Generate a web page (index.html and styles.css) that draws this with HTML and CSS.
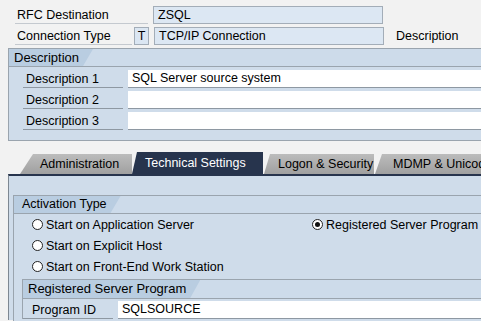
FILE: index.html
```html
<!DOCTYPE html>
<html lang="en">

<head>
    <meta charset="UTF-8" />
    <title>RFC Destination ZSQL</title>
    <link rel="stylesheet" href="styles.css">
</head>

<body>
    <div class="screen">
        <div class="top-row first">
            <span class="top-label">RFC Destination</span>
            <span class="field">ZSQL</span>
        </div>
        <div class="top-row">
            <span class="top-label short">Connection Type</span>
            <span class="code">T</span>
            <span class="field">TCP/IP Connection</span>
            <span class="note">Description</span>
        </div>

        <div class="group desc">
            <div class="group-head"><span class="head-tab">Description</span></div>
            <div class="desc-row"><span class="desc-label">Description 1</span><span class="input">SQL Server source system</span></div>
            <div class="desc-row"><span class="desc-label">Description 2</span><span class="input"></span></div>
            <div class="desc-row"><span class="desc-label">Description 3</span><span class="input"></span></div>
        </div>

        <div class="tabs">
            <div class="tab admin">Administration</div>
            <div class="tab active">Technical Settings</div>
            <div class="tab logon">Logon &amp; Security</div>
            <div class="tab mdmp">MDMP &amp; Unicode</div>
        </div>

        <div class="tab-body">
            <div class="group act">
                <div class="group-head"><span class="head-tab">Activation Type</span></div>
                <div class="radio-grid">
                    <label class="radio"><span class="dot"></span>Start on Application Server</label>
                    <label class="radio"><span class="dot on"></span>Registered Server Program</label>
                    <label class="radio"><span class="dot"></span>Start on Explicit Host</label>
                    <span></span>
                    <label class="radio"><span class="dot"></span>Start on Front-End Work Station</label>
                </div>
                <div class="sub">
                    <div class="group-head"><span class="head-tab">Registered Server Program</span></div>
                    <div class="prog-row">
                        <span class="prog-label">Program ID</span>
                        <span class="input">SQLSOURCE</span>
                    </div>
                </div>
            </div>
        </div>
    </div>
</body>

</html>
```

FILE: styles.css
```css
body {
    margin: 0;
    background: #ffffff;
    font-family: 'Liberation Sans', Arial, sans-serif;
    font-size: 12.5px;
    color: #000;
}

.screen {
    width: 481px;
    height: 321px;
    overflow: hidden;
    background: #f2f2f2;
}

/* header rows */
.top-row {
    display: flex;
    align-items: center;
    height: 18px;
    margin-top: 3px;
    padding-left: 15px;
}

.top-row.first {
    margin-top: 6px;
}

.top-label {
    width: 133px;
    height: 18px;
    line-height: 18px;
    padding-left: 2px;
    border-bottom: 1px solid #c4c9cf;
    box-sizing: border-box;
}

.top-label.short {
    width: 117px;
}

.code {
    width: 15px;
    height: 18px;
    line-height: 16px;
    margin-left: 2px;
    text-align: center;
    background: #dbe6f2;
    border: 1px solid #a3adb8;
    box-sizing: border-box;
}

.field {
    width: 230px;
    height: 18px;
    line-height: 16px;
    margin-left: 5px;
    padding-left: 4px;
    background: #dce7f3;
    border: 1px solid #a3adb8;
    box-sizing: border-box;
}

.note {
    margin-left: 12px;
}

/* groups */
.group {
    background: #cfdcea;
    border: 1px solid #9aa4ae;
    border-right: none;
}

.group-head {
    height: 17px;
    background: #cddbea;
    border-bottom: 1px solid #9aa4ae;
    display: flex;
}

.head-tab {
    background: #b9cde1;
    padding: 0 14px 0 6px;
    line-height: 17px;
    clip-path: polygon(0 0, 100% 0, calc(100% - 10px) 100%, 0 100%);
}

.desc {
    margin: 3px 0 0 8px;
    height: 93px;
    box-sizing: border-box;
}

.desc .head-tab {
    padding-left: 5px;
    font-size: 13px;
}

.desc-row {
    display: flex;
    height: 18px;
    margin-top: 3px;
    padding-left: 14px;
}

.desc-row:first-of-type {
    margin-top: 2px;
}

.desc-label {
    width: 100px;
    padding-left: 3px;
    line-height: 18px;
    border-bottom: 1px solid #8e98a2;
    box-sizing: border-box;
}

.input {
    flex: 1;
    margin-left: 5px;
    padding-left: 4px;
    line-height: 17px;
    background: #ffffff;
    border-bottom: 1px solid #8e98a2;
}

/* tabs */
.tabs {
    display: flex;
    align-items: flex-end;
    height: 22px;
    margin: 11px 0 0 20px;
}

.tab {
    flex-shrink: 0;
    height: 20px;
    line-height: 21px;
    background: linear-gradient(#bcbcbc, #a0a0a0);
    box-sizing: border-box;
    white-space: nowrap;
    clip-path: polygon(13px 0, 100% 0, 100% 100%, 0 100%);
}

.tab.admin {
    width: 112px;
    padding-left: 20px;
}

.tab.active {
    width: 131px;
    height: 22px;
    line-height: 22px;
    padding-left: 13px;
    color: #ffffff;
    background: #27344d;
    clip-path: polygon(5px 0, 100% 0, 100% 100%, 0 100%);
}

.tab.logon {
    width: 110px;
    margin-left: 1px;
    padding-left: 14px;
    clip-path: polygon(6px 0, 100% 0, 100% 100%, 0 100%);
}

.tab.mdmp {
    width: 120px;
    margin-left: 1px;
    padding-left: 18px;
    clip-path: polygon(7px 0, 100% 0, 100% 100%, 0 100%);
}

.tab-body {
    margin-left: 8px;
    height: 146px;
    background: #cfdcea;
    border-top: 2px solid #27344d;
    border-left: 1px solid #7d8792;
    padding: 19px 0 0 4px;
    box-sizing: border-box;
}

.act {
    height: 140px;
}

.act .head-tab {
    padding-left: 8px;
}

.radio-grid {
    display: grid;
    grid-template-columns: 280px 1fr;
    grid-auto-rows: 21px;
    padding: 0 0 0 18px;
}

.radio {
    display: flex;
    align-items: center;
    gap: 3px;
    white-space: nowrap;
}

.dot {
    width: 9px;
    height: 9px;
    border: 1px solid #222;
    border-radius: 50%;
    background: #ffffff;
    display: inline-flex;
    align-items: center;
    justify-content: center;
}

.dot.on::after {
    content: '';
    width: 5px;
    height: 5px;
    border-radius: 50%;
    background: #111;
}

.sub {
    margin: 2px 0 0 8px;
    border-left: 1px solid #9aa4ae;
}

.sub .group-head {
    border-top: 1px solid #9aa4ae;
    height: 18px;
}

.sub .head-tab {
    line-height: 18px;
    padding-left: 5px;
    font-size: 13px;
}

.prog-row {
    display: flex;
    height: 18px;
    margin-top: 2px;
}

.prog-label {
    width: 90px;
    padding-left: 9px;
    line-height: 18px;
    border-bottom: 1px solid #8e98a2;
    box-sizing: border-box;
}
```
